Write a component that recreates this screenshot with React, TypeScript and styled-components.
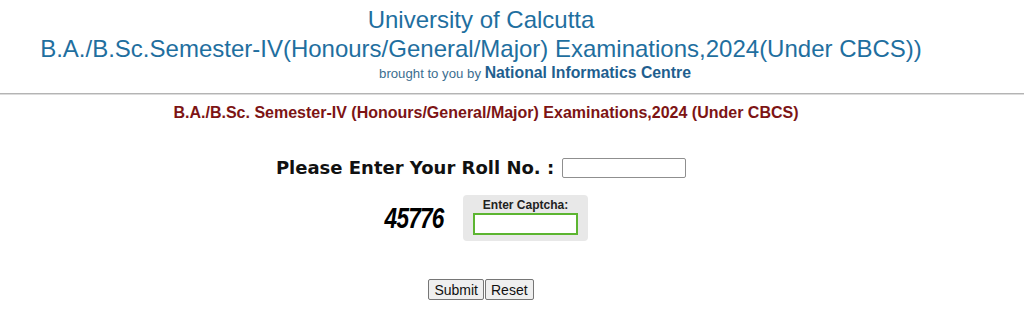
import React from "react";
import styled, { createGlobalStyle } from "styled-components";

const Global = createGlobalStyle`
  html, body { margin: 0; padding: 0; background: #fff; }
  body { font-family: "Liberation Sans", Arial, sans-serif; }
`;

const Header = styled.header`
  display: flex;
  flex-direction: column;
  align-items: center;
  padding: 6px 62px 0 0;
  color: #1f6f9f;
`;

const Title = styled.div`
  font-size: 24px;
  line-height: 28px;
`;

const SubTitle = styled.div`
  font-size: 24px;
  line-height: 30px;
`;

const Credit = styled.div`
  font-size: 13.2px;
  line-height: 18px;
  padding-left: 108px;
  color: #3b6e8f;
  b { font-size: 15.8px; color: #1f5f8f; }
`;

const Rule = styled.hr`
  margin: 10px 0 0 0;
  border: 0;
  border-top: 1px solid #b4b4b4;
  border-bottom: 1px solid #dcdcdc;
`;

const Main = styled.main`
  display: flex;
  flex-direction: column;
  align-items: center;
  padding-right: 62px;
`;

const ExamName = styled.div`
  margin-top: 8px;
  font-size: 16px;
  line-height: 20px;
  font-weight: bold;
  color: #7d1414;
  padding-left: 10px;
`;

const RollRow = styled.div`
  display: flex;
  align-items: center;
  gap: 8px;
  margin-top: 34px;
`;

const RollLabel = styled.label`
  font-family: "DejaVu Sans", Verdana, sans-serif;
  font-weight: bold;
  font-size: 18px;
  color: #111;
`;

const TextInput = styled.input`
  box-sizing: border-box;
  width: 124px;
  height: 20px;
  border: 1px solid #8f8f8f;
  border-radius: 2px;
  padding: 0 3px;
  margin: 0;
`;

const CaptchaRow = styled.div`
  display: flex;
  align-items: center;
  gap: 19px;
  margin-top: 17px;
  padding-left: 10px;
`;

const CaptchaCode = styled.span`
  display: inline-block;
  font-family: "Liberation Sans", Arial, sans-serif;
  font-weight: bold;
  font-style: italic;
  font-size: 29px;
  letter-spacing: -1px;
  color: #000;
  transform: translateX(-6px) scaleX(0.78);
  transform-origin: center;
  width: 60px;
  text-align: center;
`;

const CaptchaBox = styled.div`
  box-sizing: border-box;
  width: 125px;
  height: 46px;
  background: #e8e8e8;
  border-radius: 4px;
  display: flex;
  flex-direction: column;
  align-items: center;
  padding-top: 3px;
`;

const CaptchaLabel = styled.div`
  font-size: 12px;
  font-weight: bold;
  color: #222;
  line-height: 15px;
`;

const CaptchaInput = styled.input`
  box-sizing: border-box;
  width: 105px;
  height: 22px;
  border: 2px solid #5cb531;
  margin: 0;
  padding: 0 3px;
  background: #fff;
`;

const Buttons = styled.div`
  display: flex;
  gap: 1px;
  margin-top: 38px;
`;

const Button = styled.button`
  font-family: "Liberation Sans", Arial, sans-serif;
  font-size: 14px;
  height: 21px;
  padding: 0 5px;
  background: #efefef;
  border: 1px solid #767676;
  border-radius: 2px;
  color: #111;
  line-height: 18px;
`;

export default function App() {
  return (
    <>
      <Global />
      <Header>
        <Title>University of Calcutta</Title>
        <SubTitle>B.A./B.Sc.Semester-IV(Honours/General/Major) Examinations,2024(Under CBCS))</SubTitle>
        <Credit>
          brought to you by <b>National Informatics Centre</b>
        </Credit>
      </Header>
      <Rule />
      <Main>
        <ExamName>B.A./B.Sc. Semester-IV (Honours/General/Major) Examinations,2024 (Under CBCS)</ExamName>
        <RollRow>
          <RollLabel htmlFor="roll">Please Enter Your Roll No. :</RollLabel>
          <TextInput id="roll" type="text" />
        </RollRow>
        <CaptchaRow>
          <CaptchaCode>45776</CaptchaCode>
          <CaptchaBox>
            <CaptchaLabel>Enter Captcha:</CaptchaLabel>
            <CaptchaInput type="text" />
          </CaptchaBox>
        </CaptchaRow>
        <Buttons>
          <Button type="button">Submit</Button>
          <Button type="button">Reset</Button>
        </Buttons>
      </Main>
    </>
  );
}
